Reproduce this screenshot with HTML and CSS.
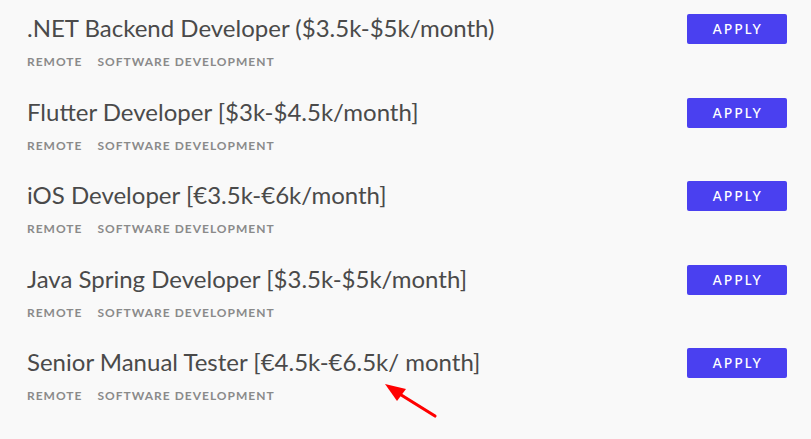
FILE: index.html
```html
<!DOCTYPE html>
<html>
<head>
<meta charset="utf-8">
<link rel="stylesheet" href="styles.css">
</head>
<body>
<div class="jobs">
  <div class="job">
    <div class="info">
      <div class="title">.NET Backend Developer ($3.5k-$5k/month)</div>
      <div class="tags"><span>Remote</span><span>Software Development</span></div>
    </div>
    <a class="apply">Apply</a>
  </div>
  <div class="job">
    <div class="info">
      <div class="title">Flutter Developer [$3k-$4.5k/month]</div>
      <div class="tags"><span>Remote</span><span>Software Development</span></div>
    </div>
    <a class="apply">Apply</a>
  </div>
  <div class="job">
    <div class="info">
      <div class="title">iOS Developer [€3.5k-€6k/month]</div>
      <div class="tags"><span>Remote</span><span>Software Development</span></div>
    </div>
    <a class="apply">Apply</a>
  </div>
  <div class="job">
    <div class="info">
      <div class="title">Java Spring Developer [$3.5k-$5k/month]</div>
      <div class="tags"><span>Remote</span><span>Software Development</span></div>
    </div>
    <a class="apply">Apply</a>
  </div>
  <div class="job">
    <div class="info">
      <div class="title">Senior Manual Tester [€4.5k-€6.5k/ month]</div>
      <div class="tags"><span>Remote</span><span>Software Development</span></div>
    </div>
    <a class="apply">Apply</a>
  </div>
</div>
<svg class="arrow" width="811" height="439" viewBox="0 0 811 439">
  <line x1="435" y1="416" x2="398" y2="393" stroke="#ff0000" stroke-width="3.2" stroke-linecap="round"/>
  <polygon points="385,384 406,389 397,401" fill="#ff0000"/>
</svg>
</body>
</html>
```
FILE: styles.css
```css
html, body {
  margin: 0;
  padding: 0;
  background: #f9f9f9;
  font-family: Lato, "Noto Sans", sans-serif;
}
.jobs {
  display: flex;
  flex-direction: column;
  padding: 0 24px 0 27px;
}
.job {
  display: flex;
  justify-content: space-between;
  align-items: flex-start;
  height: 83.5px;
  padding-top: 14px;
  box-sizing: border-box;
}
.title {
  font-size: 24px;
  line-height: 28px;
  color: #4a4a4a;
}
.tags {
  margin-top: 12px;
  display: flex;
  gap: 15px;
  font-size: 12px;
  line-height: 15px;
  font-weight: 700;
  letter-spacing: 1px;
  text-transform: uppercase;
  color: #8a8a8a;
}
.apply {
  display: flex;
  align-items: center;
  justify-content: center;
  width: 100px;
  height: 30px;
  background: #4a40f0;
  border-radius: 2px;
  color: #fff;
  font-size: 13px;
  letter-spacing: 2.4px;
  text-transform: uppercase;
  font-weight: 600;
  box-sizing: border-box;
  padding-left: 2px;
}
.arrow {
  position: absolute;
  left: 0;
  top: 0;
  pointer-events: none;
}
```
